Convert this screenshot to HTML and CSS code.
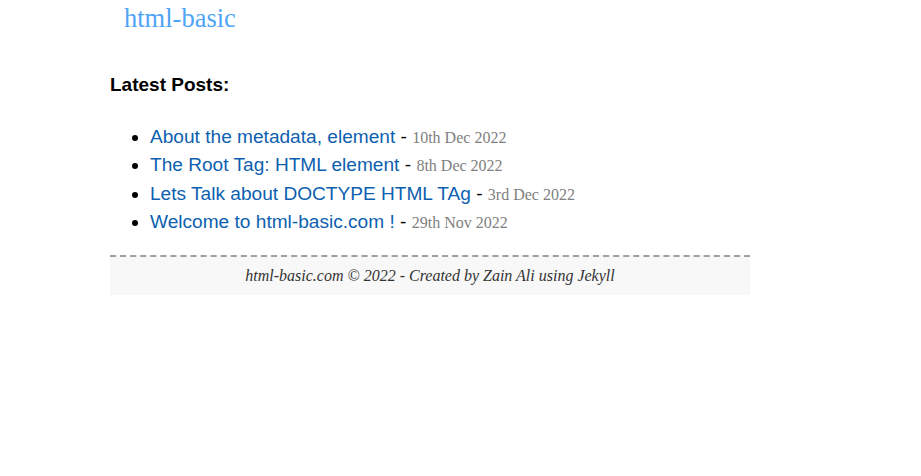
FILE: index.html
```html
<!DOCTYPE html>
<html lang="en">
<head>
    <meta charset="UTF-8">
    <meta name="viewport" content="width=device-width, initial-scale=1.0">
    <title>html-basic</title>
    <link rel="stylesheet" href="styles.css">
</head>
<body>
    <div class="wrapper">
        <header class="site-header">
            <a class="site-title" href="#">html-basic</a>
        </header>

        <main class="content">
            <h3 class="posts-heading">Latest Posts:</h3>
            <ul class="post-list">
                <li><a href="#">About the metadata, element</a> - <span class="post-date">10th Dec 2022</span></li>
                <li><a href="#">The Root Tag: HTML element</a> - <span class="post-date">8th Dec 2022</span></li>
                <li><a href="#">Lets Talk about DOCTYPE HTML TAg</a> - <span class="post-date">3rd Dec 2022</span></li>
                <li><a href="#">Welcome to html-basic.com !</a> - <span class="post-date">29th Nov 2022</span></li>
            </ul>
        </main>

        <footer class="site-footer">
            html-basic.com &copy; 2022 - Created by Zain Ali using Jekyll
        </footer>
    </div>
</body>
</html>
```

FILE: styles.css
```css
/* Basic reset */
* {
    margin: 0;
    padding: 0;
    box-sizing: border-box;
}

body {
    font-family: "Liberation Sans", Arial, sans-serif;
    color: #000;
    background-color: #fff;
}

a {
    text-decoration: none;
}

/* Page wrapper */
.wrapper {
    width: 640px;
    margin-left: 110px;
}

/* Header */
.site-header {
    padding-left: 14px;
    height: 36px;
}

.site-title {
    font-family: "Liberation Serif", "Times New Roman", serif;
    font-size: 26.5px;
    line-height: 36px;
    color: #4ea4f6;
}

/* Posts */
.content {
    padding-top: 36px;
}

.posts-heading {
    font-size: 19px;
    font-weight: bold;
    line-height: 26px;
    margin-bottom: 25px;
}

.post-list {
    padding-left: 40px;
    font-size: 19.1px;
    line-height: 28.3px;
    margin-bottom: 19px;
}

.post-list a {
    color: #0d5fb0;
}

.post-date {
    font-family: "Liberation Serif", "Times New Roman", serif;
    font-size: 16px;
    line-height: 1;
    color: #808080;
}

/* Footer */
.site-footer {
    border-top: 2px dashed #a0a0a0;
    background-color: #f8f8f8;
    font-family: "Liberation Serif", "Times New Roman", serif;
    font-style: italic;
    font-size: 16px;
    color: #333;
    text-align: center;
    padding: 9px 0 10px;
    line-height: 19px;
}
```
